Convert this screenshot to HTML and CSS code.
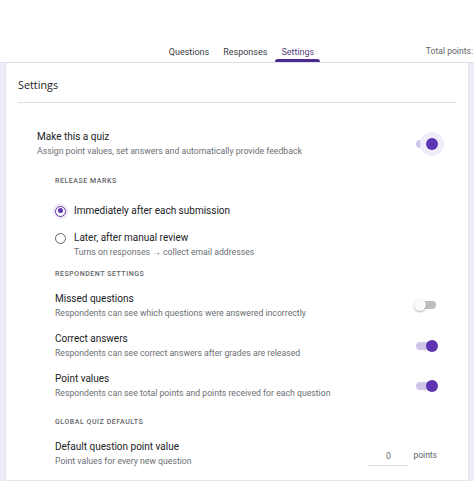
FILE: index.html
```html
<!DOCTYPE html>
<html lang="en">
<head>
<meta charset="utf-8">
<title>Settings</title>
<link rel="stylesheet" href="styles.css">
</head>
<body>
<header class="topbar">
  <div class="spacer"></div>
  <nav class="tabs">
    <span class="tab">Questions</span>
    <span class="tab">Responses</span>
    <span class="tab active">Settings</span>
  </nav>
  <div class="total">Total points: 0</div>
</header>
<main class="page">
  <section class="card">
    <h1 class="card-title">Settings</h1>
    <div class="divider"></div>

    <div class="quiz">
      <div class="row quiz-row">
        <div class="text">
          <div class="label">Make this a quiz</div>
          <div class="sub">Assign point values, set answers and automatically provide feedback</div>
        </div>
        <span class="toggle on focus"><span class="track"></span><span class="thumb"></span></span>
      </div>

      <div class="group">
        <div class="section-label first">Release marks</div>
        <div class="radio-row r1">
          <span class="radio checked"></span>
          <div class="text">
            <div class="label">Immediately after each submission</div>
          </div>
        </div>
        <div class="radio-row r2">
          <span class="radio"></span>
          <div class="text">
            <div class="label">Later, after manual review</div>
            <div class="sub small">Turns on responses → collect email addresses</div>
          </div>
        </div>

        <div class="section-label s2">Respondent settings</div>
        <div class="row r-missed">
          <div class="text">
            <div class="label">Missed questions</div>
            <div class="sub">Respondents can see which questions were answered incorrectly</div>
          </div>
          <span class="toggle off"><span class="track"></span><span class="thumb"></span></span>
        </div>
        <div class="row r-next">
          <div class="text">
            <div class="label">Correct answers</div>
            <div class="sub">Respondents can see correct answers after grades are released</div>
          </div>
          <span class="toggle on"><span class="track"></span><span class="thumb"></span></span>
        </div>
        <div class="row r-next">
          <div class="text">
            <div class="label">Point values</div>
            <div class="sub">Respondents can see total points and points received for each question</div>
          </div>
          <span class="toggle on"><span class="track"></span><span class="thumb"></span></span>
        </div>

        <div class="section-label s3">Global quiz defaults</div>
        <div class="row r-default">
          <div class="text">
            <div class="label">Default question point value</div>
            <div class="sub">Point values for every new question</div>
          </div>
          <div class="points">
            <span class="points-input">0</span>
            <span class="points-unit">points</span>
          </div>
        </div>
      </div>
    </div>
  </section>
</main>
</body>
</html>
```

FILE: styles.css
```css
html, body {
  margin: 0;
  padding: 0;
}
body {
  width: 474px;
  height: 481px;
  overflow: hidden;
  background: #f0ebf8;
  font-family: Roboto, "Liberation Sans", Arial, sans-serif;
  color: #202124;
  display: flex;
  flex-direction: column;
}

.topbar {
  height: 63px;
  flex: none;
  background: #fff;
  border-bottom: 1px solid #e2dde9;
  box-sizing: border-box;
  display: grid;
  grid-template-columns: 1fr auto 1fr;
  align-items: end;
}
.tabs {
  display: flex;
  gap: 2px;
  margin-left: 9px;
}
.tab {
  font-size: 9px;
  font-weight: 400;
  color: #3c4043;
  padding: 0 6px;
  height: 16px;
  line-height: 12px;
  box-sizing: border-box;
  position: relative;
}
.tab.active {
  color: #56437c;
}
.tab.active::after {
  content: "";
  position: absolute;
  left: 0;
  right: 0;
  bottom: 0;
  height: 3px;
  border-radius: 3px 3px 0 0;
  background: #4a2a8f;
}
.total {
  justify-self: end;
  font-size: 8.6px;
  color: #5f6368;
  line-height: 10px;
  margin-right: -6px;
  align-self: start;
  margin-top: 46px;
  white-space: nowrap;
}

.page {
  flex: 1;
  display: flex;
  padding: 0 5px 0 5px;
}
.card {
  flex: 1;
  background: #fff;
  border: 1px solid #e6e1ee;
  border-top: none;
  padding: 14px 12px 0 12px;
}
.card-title {
  margin: 0;
  font-family: "Open Sans", Roboto, sans-serif;
  font-weight: 400;
  font-size: 10.8px;
  line-height: 16px;
  color: #202124;
}
.divider {
  margin-top: 9px;
  height: 1px;
  background: #dadce0;
}

.quiz {
  padding: 27px 18px 0 19px;
}
.row {
  display: flex;
  align-items: center;
  justify-content: space-between;
}
.text {
  display: flex;
  flex-direction: column;
}
.label {
  font-size: 10px;
  line-height: 14px;
  color: #202124;
}
.sub {
  font-size: 8.7px;
  line-height: 15px;
  color: #6b6f74;
}
.sub.small {
  line-height: 14px;
}

.group {
  padding-left: 18px;
}
.section-label {
  font-size: 7px;
  font-weight: 500;
  letter-spacing: 0.55px;
  text-transform: uppercase;
  color: #5f6368;
  line-height: 12px;
}
.section-label.first { margin-top: 16px; }
.section-label.s2 { margin-top: 9px; }
.section-label.s3 { margin-top: 15px; }

.radio-row {
  display: flex;
  align-items: flex-start;
  gap: 8px;
}
.radio-row.r1 { margin-top: 17px; }
.radio-row.r2 { margin-top: 13px; }
.radio {
  width: 11px;
  height: 11px;
  box-sizing: border-box;
  border: 1.5px solid #5f6368;
  border-radius: 50%;
  flex: none;
  margin-top: 1.5px;
  position: relative;
}
.radio.checked {
  border-color: #5e35b1;
  box-shadow: 0 0 0 2px #ede7f6;
}
.radio.checked::after {
  content: "";
  position: absolute;
  left: 1.5px;
  top: 1.5px;
  width: 5px;
  height: 5px;
  border-radius: 50%;
  background: #5e35b1;
}

.r-missed { margin-top: 12px; }
.r-next { margin-top: 11px; }
.r-default { margin-top: 12px; }

.toggle {
  width: 24px;
  height: 14px;
  position: relative;
  flex: none;
}
.toggle .track {
  position: absolute;
  left: 2px;
  right: 2px;
  top: 3px;
  height: 8px;
  border-radius: 4px;
  background: #d1c4e9;
}
.toggle .thumb {
  position: absolute;
  top: 1px;
  width: 12px;
  height: 12px;
  border-radius: 50%;
  background: #5e35b1;
}
.toggle.on .thumb {
  right: 0;
}
.toggle.focus .thumb {
  box-shadow: 0 0 0 6px #f1ecf9;
}
.toggle.off .track {
  background: #bdbdbd;
}
.toggle.off .thumb {
  left: 0;
  background: #fafafa;
  box-shadow: 0 1px 2px rgba(0,0,0,0.3);
}
.toggle.on { margin-top: -1px; }
.toggle.off { margin-top: -3px; }

.points {
  display: flex;
  align-items: center;
  gap: 5px;
  margin-right: 1px;
  margin-top: 1px;
}
.points-input {
  width: 40px;
  text-align: center;
  font-size: 8.5px;
  color: #5f6368;
  line-height: 12px;
  padding-bottom: 3px;
  border-bottom: 1px solid #e0e0e0;
  margin-top: 6px;
}
.points-unit {
  font-size: 8.5px;
  color: #5f6368;
  line-height: 12px;
}
```
